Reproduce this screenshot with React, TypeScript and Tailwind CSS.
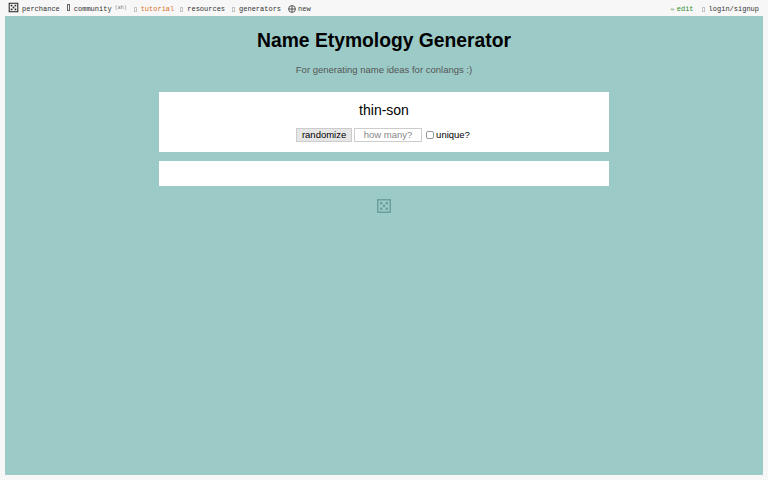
function Dice({ className }: { className: string }) {
  return (
    <svg viewBox="0 0 16 16" className={className} fill="currentColor">
      <path
        fillRule="evenodd"
        d="M1 1h14v14H1V1zm1.5 1.5v11h11v-11h-11z"
      />
      <rect x="4" y="4" width="2.4" height="2.4" />
      <rect x="9.6" y="4" width="2.4" height="2.4" />
      <rect x="6.8" y="6.8" width="2.4" height="2.4" />
      <rect x="4" y="9.6" width="2.4" height="2.4" />
      <rect x="9.6" y="9.6" width="2.4" height="2.4" />
    </svg>
  );
}

// stands in for the emoji that had no font in the screenshot
function Tofu({ tall }: { tall?: boolean }) {
  return (
    <span
      className={
        tall
          ? "inline-block w-[3px] h-[7px] -mt-[3px] border border-[#666] mr-[4px]"
          : "inline-block w-[3px] h-[5px] border border-[#c4c4c4] mr-[4px]"
      }
    />
  );
}

function NavLink({
  children,
  className = "text-[#333]",
}: {
  children: React.ReactNode;
  className?: string;
}) {
  return (
    <span className={`flex items-center whitespace-nowrap ${className}`}>
      {children}
    </span>
  );
}

export default function App() {
  return (
    <div className="h-[480px] w-[768px] overflow-hidden bg-[#f7f7f7] flex flex-col font-['Liberation_Sans',sans-serif]">
      <nav className="h-4 flex items-center justify-between pl-[8px] pr-[9px] pt-[2px] font-['Liberation_Mono',monospace] text-[7px]">
        <div className="flex items-center gap-[7px]">
          <NavLink>
            <Dice className="w-[11px] h-[11px] mr-[3px] -mt-[3px] text-[#222]" />
            perchance
          </NavLink>
          <NavLink>
            <Tofu tall />
            community
            <span className="ml-[3px] text-[5px] text-[#777]">(ah)</span>
          </NavLink>
          <NavLink className="text-[#d9722c]">
            <Tofu />
            tutorial
          </NavLink>
          <NavLink className="-ml-[1px] text-[#333]">
            <Tofu />
            resources
          </NavLink>
          <NavLink>
            <Tofu />
            generators
          </NavLink>
          <NavLink className="text-[#333]">
            <svg
              viewBox="0 0 16 16"
              className="w-[8px] h-[8px] mr-[2px] -mt-[1px]"
              fill="none"
              stroke="currentColor"
              strokeWidth="1.6"
            >
              <circle cx="8" cy="8" r="6.8" />
              <path d="M8 1.2v13.6M1.2 8h13.6" />
            </svg>
            new
          </NavLink>
        </div>
        <div className="flex items-center gap-[8px]">
          <NavLink className="text-[#2c8a2c]">
            <span className="mr-[2px] text-[#7aa87a]">✏</span>
            edit
          </NavLink>
          <NavLink>
            <Tofu />
            login/signup
          </NavLink>
        </div>
      </nav>

      <main className="mx-[5px] h-[459px] bg-[#9ccbc7] flex flex-col items-center">
        <h1 className="mt-[13px] text-[19.3px] leading-6 font-bold text-black">
          Name Etymology Generator
        </h1>
        <p className="mt-[11px] text-[9.5px] leading-3 text-[#555]">
          For generating name ideas for conlangs :)
        </p>

        <section className="mt-[16px] w-[450px] h-[60px] bg-white flex flex-col items-center pt-[9px]">
          <div className="text-[14px] leading-[18px] text-black">thin-son</div>
          <div className="mt-[9px] mr-[2px] flex items-center">
            <button className="w-[56px] h-[14px] bg-[#e6e6e6] border border-[#ccc] text-[9.5px] leading-none text-black">
              randomize
            </button>
            <input
              placeholder="how many?"
              className="ml-[2px] w-[68px] h-[14px] border border-[#ccc] text-center text-[9.5px] outline-none placeholder:text-[#888]"
            />
            <input
              type="checkbox"
              className="ml-[4px] w-[8px] h-[8px] appearance-none border border-[#999] rounded-[2px] bg-white"
            />
            <span className="ml-[2px] text-[9.5px] text-black">unique?</span>
          </div>
        </section>

        <section className="mt-[9px] w-[450px] h-[25px] bg-white" />

        <Dice className="mt-[12px] w-[16px] h-[16px] text-[#6f9f9c]" />
      </main>
    </div>
  );
}
